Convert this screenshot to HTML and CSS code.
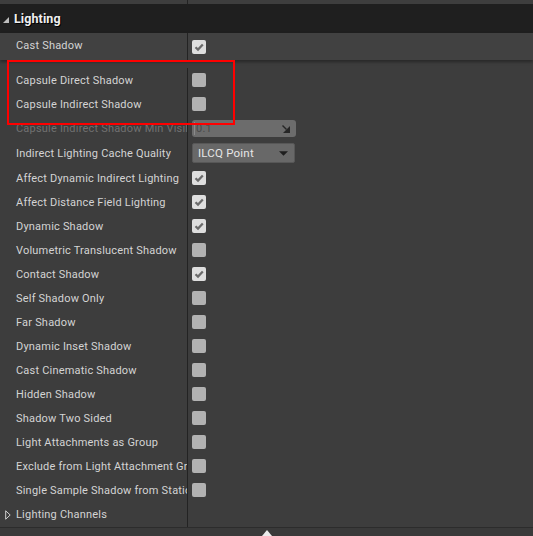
FILE: index.html
```html
<!DOCTYPE html>
<html>
<head>
<meta charset="utf-8">
<link rel="stylesheet" href="styles.css">
</head>
<body>
<div class="panel">
  <div class="strip"><div class="lab"></div><div class="val"></div></div>
  <div class="header">
    <span class="tri"></span><span class="title">Lighting</span>
  </div>
  <div class="row cast">
    <div class="lab">Cast Shadow</div>
    <div class="val"><span class="cb on"><svg viewBox="0 0 14 14"><path d="M3.5 7.2 L6 9.6 L10.8 4.4" /></svg></span></div>
  </div>
  <div class="gap"></div>
  <div class="list">
    <div class="row"><div class="lab">Capsule Direct Shadow</div><div class="val"><span class="cb"></span></div></div>
    <div class="row"><div class="lab">Capsule Indirect Shadow</div><div class="val"><span class="cb"></span></div></div>
    <div class="row"><div class="lab dim">Capsule Indirect Shadow Min Visibility</div><div class="val"><div class="num"><span class="bar"></span><span class="numtext">0.1</span><svg class="numicon" viewBox="0 0 8 8"><path d="M8 1 L8 8 L1 8 Z" /><path d="M0.5 0.5 L4.5 4.5" class="st" /></svg></div></div></div>
    <div class="row tall"><div class="lab">Indirect Lighting Cache Quality</div><div class="val"><div class="dd"><span>ILCQ Point</span><svg class="ddarrow" viewBox="0 0 8 4"><path d="M0 0 L8 0 L4 4 Z" /></svg></div></div></div>
    <div class="row"><div class="lab">Affect Dynamic Indirect Lighting</div><div class="val"><span class="cb on"><svg viewBox="0 0 14 14"><path d="M3.5 7.2 L6 9.6 L10.8 4.4" /></svg></span></div></div>
    <div class="row"><div class="lab">Affect Distance Field Lighting</div><div class="val"><span class="cb on"><svg viewBox="0 0 14 14"><path d="M3.5 7.2 L6 9.6 L10.8 4.4" /></svg></span></div></div>
    <div class="row"><div class="lab">Dynamic Shadow</div><div class="val"><span class="cb on"><svg viewBox="0 0 14 14"><path d="M3.5 7.2 L6 9.6 L10.8 4.4" /></svg></span></div></div>
    <div class="row"><div class="lab">Volumetric Translucent Shadow</div><div class="val"><span class="cb"></span></div></div>
    <div class="row"><div class="lab">Contact Shadow</div><div class="val"><span class="cb on"><svg viewBox="0 0 14 14"><path d="M3.5 7.2 L6 9.6 L10.8 4.4" /></svg></span></div></div>
    <div class="row"><div class="lab">Self Shadow Only</div><div class="val"><span class="cb"></span></div></div>
    <div class="row"><div class="lab">Far Shadow</div><div class="val"><span class="cb"></span></div></div>
    <div class="row"><div class="lab">Dynamic Inset Shadow</div><div class="val"><span class="cb"></span></div></div>
    <div class="row"><div class="lab">Cast Cinematic Shadow</div><div class="val"><span class="cb"></span></div></div>
    <div class="row"><div class="lab">Hidden Shadow</div><div class="val"><span class="cb"></span></div></div>
    <div class="row"><div class="lab">Shadow Two Sided</div><div class="val"><span class="cb"></span></div></div>
    <div class="row"><div class="lab">Light Attachments as Group</div><div class="val"><span class="cb"></span></div></div>
    <div class="row"><div class="lab">Exclude from Light Attachment Group</div><div class="val"><span class="cb"></span></div></div>
    <div class="row"><div class="lab">Single Sample Shadow from Stationary Lights</div><div class="val"><span class="cb"></span></div></div>
    <div class="row"><div class="lab group"><svg class="gtri" viewBox="0 0 6 10"><path d="M0.7 0.8 L5.2 5 L0.7 9.2 Z" /></svg>Lighting Channels</div><div class="val"></div></div>
  </div>
  <div class="bottom"><svg class="up" viewBox="0 0 10 6"><path d="M0 6 L5 0 L10 6 Z" /></svg></div>
  <div class="mark"></div>
</div>
</body>
</html>
```

FILE: styles.css
```css
html, body {
  margin: 0;
  padding: 0;
  background: #3d3d3d;
}
.panel {
  position: relative;
  width: 533px;
  height: 536px;
  overflow: hidden;
  background: #3d3d3d;
  font-family: Roboto, "Liberation Sans", sans-serif;
  font-size: 11px;
  letter-spacing: 0.2px;
  color: #d4d4d4;
}
.strip {
  display: flex;
  height: 4px;
  background: #3e3e3e;
}
.lab {
  width: 188px;
  flex: none;
  box-sizing: border-box;
  padding-left: 16px;
  white-space: nowrap;
  overflow: hidden;
  border-right: 1px solid #232323;
  height: 100%;
  display: flex;
  align-items: center;
}
.val {
  flex: 1;
  display: flex;
  align-items: center;
  padding-left: 4px;
  height: 100%;
}
.header {
  height: 29px;
  background: #1f1f1f;
  display: flex;
  align-items: center;
}
.tri {
  width: 0;
  height: 0;
  margin-left: 3px;
  margin-top: 2px;
  border-style: solid;
  border-width: 0 0 6px 6px;
  border-color: transparent transparent #bdbdbd transparent;
}
.title {
  margin-left: 5px;
  font-weight: bold;
  font-size: 12.5px;
  letter-spacing: 0.1px;
  color: #f0f0f0;
  text-shadow: 1px 1px 0 #000;
}
.row {
  display: flex;
  height: 24px;
}
.row.cast {
  height: 27px;
  background: #414141;
  box-shadow: 0 2px 3px rgba(0,0,0,0.35);
  position: relative;
}
.row.cast .lab {
  padding-bottom: 2px;
}
.row.cast .val {
  padding-bottom: 2px;
}
.row.tall {
  height: 26px;
}
.gap {
  height: 8px;
}
.cb {
  width: 14px;
  height: 14px;
  border-radius: 2px;
  background: #b2b2b2;
  display: block;
}
.cb.on {
  background: #dedede;
}
.cb svg {
  display: block;
  width: 14px;
  height: 14px;
}
.cb svg path {
  fill: none;
  stroke: #6a6a6a;
  stroke-width: 2.2;
}
.dim {
  color: #707070;
}
.num {
  position: relative;
  width: 104px;
  height: 17px;
  background: #6c6c6c;
  border-radius: 3px;
  display: flex;
  align-items: center;
  margin-top: 1px;
}
.bar {
  width: 1px;
  height: 13px;
  background: #8a8a8a;
  margin-left: 2px;
}
.numtext {
  margin-left: 1px;
  color: #4a4a4a;
}
.numicon {
  width: 8px;
  height: 8px;
  margin-left: auto;
  margin-right: 6px;
}
.numicon path {
  fill: #262626;
}
.numicon path.st {
  fill: none;
  stroke: #262626;
  stroke-width: 1.4;
}
.dd {
  width: 96px;
  height: 18px;
  background: #686868;
  border: 1px solid #575757;
  border-radius: 2px;
  display: flex;
  align-items: center;
  padding-left: 5px;
  box-sizing: content-box;
  color: #e6e6e6;
  font-size: 11.5px;
}
.ddarrow {
  width: 9px;
  height: 5px;
  margin-left: auto;
  margin-right: 6px;
}
.ddarrow path {
  fill: #1e1e1e;
}
.lab.group {
  padding-left: 5px;
}
.gtri {
  width: 6px;
  height: 10px;
  margin-right: 5px;
}
.gtri path {
  fill: none;
  stroke: #cfcfcf;
  stroke-width: 1;
}
.list .row:last-child {
  height: 25px;
}
.bottom {
  height: 10px;
  border-top: 1px solid #2c2c2c;
  background: #3a3a3a;
  position: relative;
}
.up {
  position: absolute;
  left: 262px;
  top: 2px;
  width: 10px;
  height: 6px;
}
.up path {
  fill: #ececec;
}
.mark {
  position: absolute;
  left: 7px;
  top: 60px;
  width: 224px;
  height: 61px;
  border: 2px solid #ff0000;
}
```
